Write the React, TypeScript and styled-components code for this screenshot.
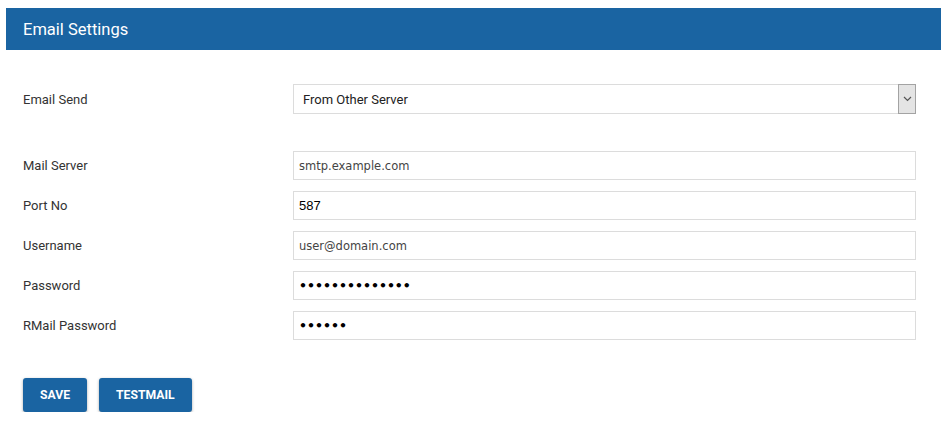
import styled, { createGlobalStyle } from 'styled-components';

const GlobalStyle = createGlobalStyle`
  html, body {
    margin: 0;
    padding: 0;
    background: #fff;
    font-family: Roboto, "Liberation Sans", sans-serif;
  }
`;

const fields = [
  { label: 'Mail Server', value: 'smtp.example.com', type: 'text' },
  { label: 'Port No', value: '587', type: 'number' },
  { label: 'Username', value: 'user@domain.com', type: 'text' },
  { label: 'Password', value: 'secretpassword', type: 'password' },
  { label: 'RMail Password', value: 'secret', type: 'password' }
];

const App = () => {
  return (
    <Page>
      <GlobalStyle />
      <Header>Email Settings</Header>

      <Form>
        <SendRow>
          <Label>Email Send</Label>
          <SelectBox>
            <SelectText>From Other Server</SelectText>
            <ArrowButton>
              <svg width="9" height="6" viewBox="0 0 9 6">
                <path d="M1 1 L4.5 4.5 L8 1" fill="none" stroke="#555" strokeWidth="1.2" />
              </svg>
            </ArrowButton>
          </SelectBox>
        </SendRow>

        <FieldList>
          {fields.map((f) => (
            <Row key={f.label}>
              <Label>{f.label}</Label>
              <Input
                type={f.type}
                defaultValue={f.value}
                $numeric={f.type === 'number'}
                $password={f.type === 'password'}
                readOnly
              />
            </Row>
          ))}
        </FieldList>

        <Buttons>
          <Button>SAVE</Button>
          <Button>TESTMAIL</Button>
        </Buttons>
      </Form>
    </Page>
  );
};

export default App;

const Page = styled.div`
  padding: 8px 0 0 6px;
  width: 941px;
  box-sizing: border-box;
`;

const Header = styled.div`
  height: 42px;
  background-color: #1a64a2;
  color: #fff;
  font-size: 16.5px;
  display: flex;
  align-items: center;
  padding: 1px 0 0 17px;
  box-sizing: border-box;
`;

const Form = styled.div`
  padding: 34px 25px 0 17px;
`;

const Row = styled.div`
  display: grid;
  grid-template-columns: 270px 1fr;
  align-items: center;
`;

const SendRow = styled(Row)`
  margin-bottom: 37px;
`;

const FieldList = styled.div`
  display: flex;
  flex-direction: column;
  gap: 11px;
`;

const Label = styled.label`
  font-size: 13px;
  color: #333;
`;

const SelectBox = styled.div`
  height: 30px;
  box-sizing: border-box;
  border: 1px solid #dcdcdc;
  display: flex;
  align-items: center;
  justify-content: space-between;
  padding-left: 9px;
`;

const SelectText = styled.span`
  font-size: 13px;
  color: #222;
`;

const ArrowButton = styled.div`
  width: 18px;
  height: 30px;
  box-sizing: border-box;
  margin-right: -1px;
  background: #e4e4e4;
  border: 1px solid #a3a3a3;
  display: flex;
  align-items: center;
  justify-content: center;
`;

const Input = styled.input<{ $numeric?: boolean; $password?: boolean }>`
  height: 29px;
  box-sizing: border-box;
  border: 1px solid #dcdcdc;
  padding: 0 5px;
  outline: none;
  font-family: ${(p) => (p.$numeric ? '"Liberation Sans", Arial' : '"DejaVu Sans", Verdana')}, sans-serif;
  font-size: ${(p) => (p.$password ? '12.5px' : p.$numeric ? '13px' : '11.5px')};
  font-weight: ${(p) => (p.$password ? 700 : 400)};
  color: ${(p) => (p.$numeric || p.$password ? '#000' : '#444')};
  -moz-appearance: textfield;

  &::-webkit-outer-spin-button,
  &::-webkit-inner-spin-button {
    -webkit-appearance: none;
    margin: 0;
  }
`;

const Buttons = styled.div`
  display: flex;
  gap: 12px;
  margin-top: 38px;
`;

const Button = styled.button`
  height: 34px;
  padding: 0 17px;
  border: none;
  border-radius: 3px;
  background-color: #1a64a2;
  color: #fff;
  font-family: Roboto, "Liberation Sans", sans-serif;
  font-size: 12.2px;
  font-weight: 700;
  box-shadow: 0 1px 3px rgba(0, 0, 0, 0.35);
  cursor: pointer;
`;
